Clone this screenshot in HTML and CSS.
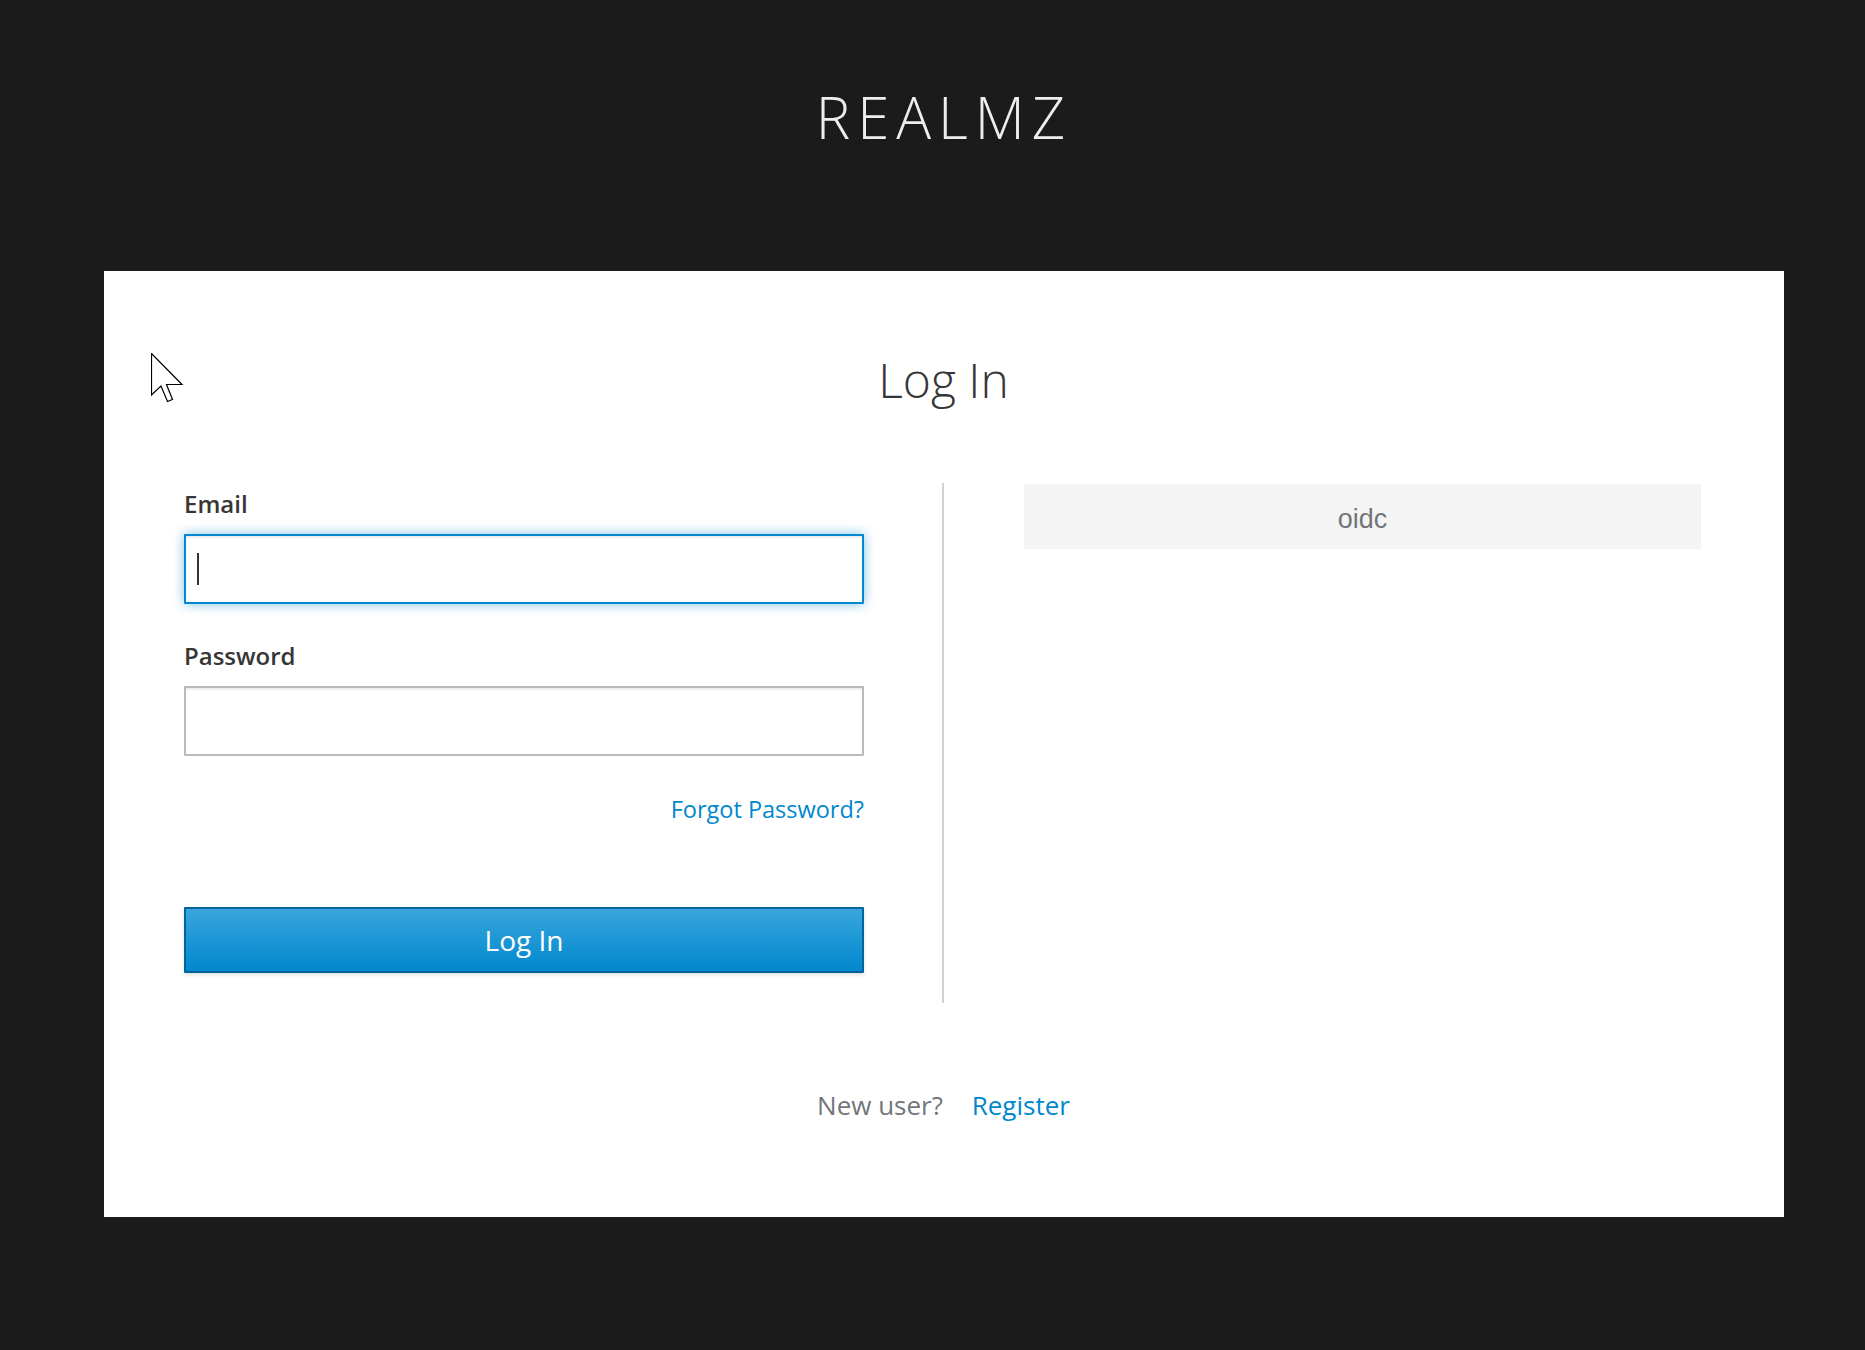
FILE: index.html
```html
<!DOCTYPE html>
<html lang="en">
<head>
<meta charset="utf-8">
<title>Log in to realmz</title>
<link rel="stylesheet" href="styles.css">
</head>
<body>
<div class="page">
  <header class="brand">REALMZ</header>
  <main class="card">
    <h1 class="title">Log In</h1>
    <div class="columns">
      <form class="form-col">
        <label class="label" for="email">Email</label>
        <div class="field">
          <input id="email" class="input input-focus" type="text">
          <span class="caret"></span>
        </div>
        <label class="label label-pass" for="password">Password</label>
        <div class="field">
          <input id="password" class="input" type="password">
        </div>
        <div class="forgot-row"><a class="link" href="#">Forgot Password?</a></div>
        <button class="btn-primary" type="button">Log In</button>
      </form>
      <div class="divider"></div>
      <div class="social-col">
        <a class="social-btn" href="#">oidc</a>
      </div>
    </div>
    <div class="register">
      <span class="muted">New user?</span>
      <a class="link" href="#">Register</a>
    </div>
    <svg class="pointer" width="34" height="52" viewBox="0 0 34 52">
      <polygon points="0.5,0.5 0.5,42 10,33 16.5,48.5 21.5,46.5 15.5,31.5 31,31.5" fill="#fff" stroke="#000" stroke-width="1.2" stroke-linejoin="miter"/>
    </svg>
  </main>
</div>
</body>
</html>
```
FILE: styles.css
```css
html, body {
  margin: 0;
  padding: 0;
  background: #1b1b1b;
  font-family: "Open Sans", "Liberation Sans", sans-serif;
}

.page {
  width: 1680px;
  margin-left: 104px;
  padding-top: 82px;
}

.brand {
  height: 70px;
  line-height: 70px;
  text-align: center;
  color: #eeeeee;
  font-size: 58px;
  font-weight: 300;
  letter-spacing: 7px;
}

.card {
  position: relative;
  margin-top: 119px;
  background: #fff;
  padding: 79px 81px 94px 80px;
}

.title {
  margin: 0;
  height: 60px;
  line-height: 60px;
  text-align: center;
  font-size: 48px;
  font-weight: 300;
  color: #363636;
}

.columns {
  display: flex;
  margin-top: 73px;
}

.form-col {
  width: 680px;
  margin: 0;
  padding: 5px 0 30px;
  display: flex;
  flex-direction: column;
}

.label {
  display: block;
  height: 32px;
  line-height: 32px;
  font-size: 24px;
  font-weight: 600;
  color: #363636;
  margin-bottom: 14px;
}

.label-pass {
  margin-top: 36px;
}

.field {
  position: relative;
}

.input {
  display: block;
  box-sizing: border-box;
  width: 680px;
  height: 70px;
  margin: 0;
  border: 2px solid #bbbbbb;
  border-radius: 1px;
  background: #fff;
  box-shadow: inset 0 2px 2px rgba(3, 3, 3, 0.08);
  outline: none;
}

.input-focus {
  border-color: #0088ce;
  box-shadow: inset 0 2px 2px rgba(3, 3, 3, 0.075), 0 0 12px rgba(0, 136, 206, 0.5);
}

.caret {
  position: absolute;
  left: 13px;
  top: 19px;
  width: 2px;
  height: 32px;
  background: #333;
}

.forgot-row {
  margin-top: 37px;
  height: 32px;
  line-height: 32px;
  text-align: right;
}

.link {
  color: #0088ce;
  text-decoration: none;
  font-size: 23.5px;
}

.btn-primary {
  margin-top: 82px;
  box-sizing: border-box;
  width: 680px;
  height: 66px;
  border: 2px solid #00659c;
  border-radius: 1px;
  background: linear-gradient(to bottom, #39a5dc 0%, #0088ce 100%);
  color: #fff;
  font-family: "Open Sans", "Liberation Sans", sans-serif;
  font-size: 28px;
  padding: 0;
  box-shadow: 0 2px 4px rgba(0, 0, 0, 0.12);
}

.divider {
  width: 2px;
  background: #d1d1d1;
  margin: 0 80px 0 78px;
}

.social-col {
  width: 677px;
  padding-top: 1px;
}

.social-btn {
  display: block;
  box-sizing: border-box;
  height: 65px;
  padding-top: 5px;
  line-height: 60px;
  background: #f4f4f4;
  text-align: center;
  color: #72767b;
  text-decoration: none;
  font-family: "Liberation Sans", Arial, sans-serif;
  font-size: 27px;
}

.register {
  margin-top: 84px;
  height: 36px;
  line-height: 36px;
  text-align: center;
  font-size: 26px;
}

.muted {
  color: #72767b;
  margin-right: 22px;
}

.register .link {
  font-size: 26px;
}

.pointer {
  position: absolute;
  left: 47px;
  top: 82px;
}
```
